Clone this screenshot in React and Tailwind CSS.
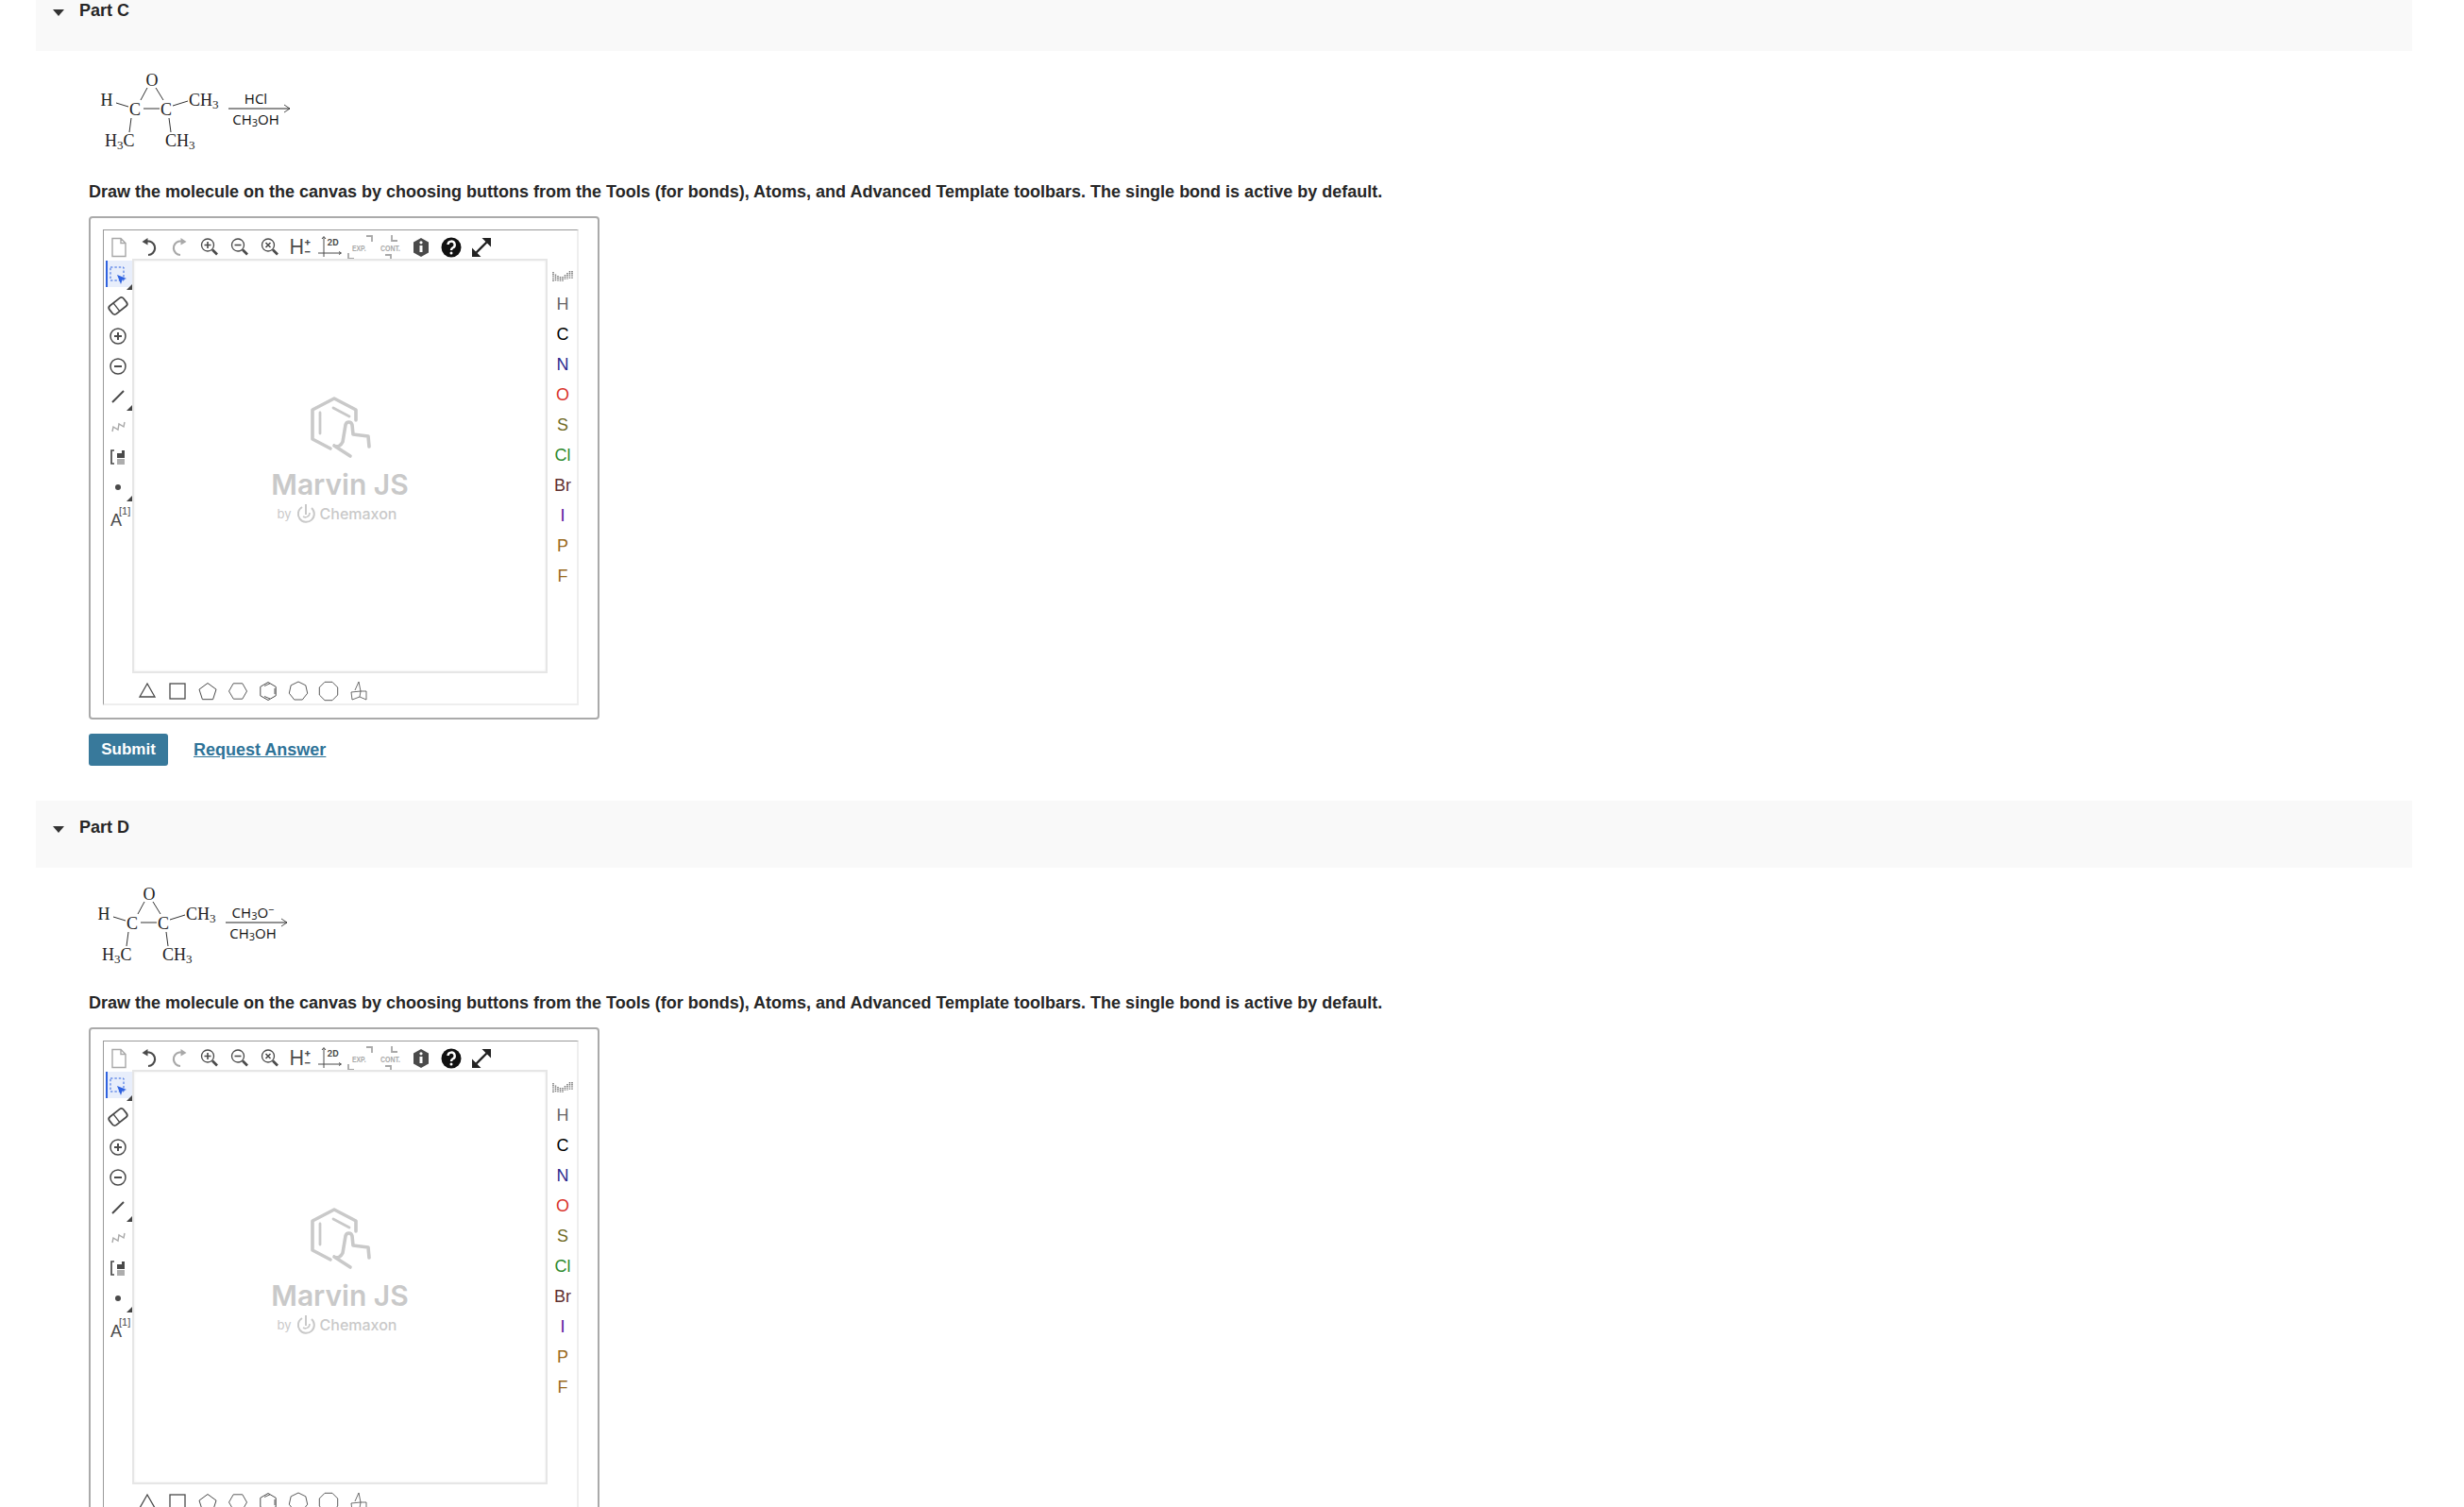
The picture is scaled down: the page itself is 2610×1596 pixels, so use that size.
const G = "#4a4a4a";
const L = "#a8a8a8";

function Bond({ d }) {
  return <line x1={d[0]} y1={d[1]} x2={d[2]} y2={d[3]} stroke="#333" strokeWidth="1" />;
}

function Molecule({ top, className }) {
  const serif = { fontFamily: '"Liberation Serif", serif', fontSize: 18, fill: "#222" };
  const sans = { fontFamily: '"Open Sans", "Noto Sans", sans-serif', fontSize: 15, fill: "#111", textAnchor: "middle" };
  const sub = { fontSize: 13, dy: 3 };
  const bonds = [
    [53, 20, 46, 33], [62, 20, 70, 33], [49, 42, 66, 42], [20, 36, 33, 40],
    [80, 39, 96, 34], [36, 52, 34, 67], [76, 52, 78, 67],
  ];
  return (
    <svg width="220" height="95" viewBox="0 0 220 95" className={className}>
      <text x="58" y="18" textAnchor="middle" {...serif}>O</text>
      <text x="10" y="39" textAnchor="middle" {...serif}>H</text>
      <text x="40" y="49" textAnchor="middle" {...serif}>C</text>
      <text x="73" y="49" textAnchor="middle" {...serif}>C</text>
      <text x="97" y="39" {...serif}>CH<tspan {...sub}>3</tspan></text>
      <text x="8" y="82" {...serif}>H<tspan {...sub}>3</tspan><tspan dy="-3">C</tspan></text>
      <text x="72" y="82" {...serif}>CH<tspan {...sub}>3</tspan></text>
      {bonds.map((d, i) => <Bond key={i} d={d} />)}
      <line x1="139" y1="42" x2="204" y2="42" stroke="#222" strokeWidth="1" />
      <path d="M198 38 L204 42 L198 46" fill="none" stroke="#222" strokeWidth="0.8" />
      <text x="168" y="37" {...sans}>{top}</text>
      <text x="168" y="59" {...sans}>CH<tspan fontSize="11" dy="2">3</tspan><tspan dy="-2">OH</tspan></text>
    </svg>
  );
}

function Ic({ children, size = 26 }) {
  return (
    <svg width={size} height={size} viewBox="0 0 26 26" fill="none" stroke={G} strokeWidth="1.6">
      {children}
    </svg>
  );
}

function Mag({ children }) {
  return (
    <Ic>
      <circle cx="11" cy="10.5" r="6.5" strokeWidth="1.3" />
      {children}
      <line x1="16" y1="15.5" x2="21" y2="20.5" strokeWidth="2.6" />
    </Ic>
  );
}

const topIcons = [
  <Ic><path d="M6 3.5 H15 L20 8.5 V22.5 H6 Z M15 3.5 V8.5 H20" stroke={L} strokeWidth="1.4" /></Ic>,
  <Ic><path d="M9 6.5 H13 A7.3 7.3 0 0 1 12 21" strokeWidth="2.2" /><path d="M5.5 7 L11.5 3 L11.5 10.5 Z" fill={G} stroke="none" /></Ic>,
  <Ic><path d="M17 6.5 H13 A7.3 7.3 0 0 0 14 21" stroke={L} strokeWidth="2.2" /><path d="M20.5 7 L14.5 3 L14.5 10.5 Z" fill={L} stroke="none" /></Ic>,
  <Mag><path d="M11 7 V14 M7.5 10.5 H14.5" strokeWidth="1.6" /></Mag>,
  <Mag><path d="M7.5 10.5 H14.5" strokeWidth="1.6" /></Mag>,
  <Mag><path d="M8.5 8 L13.5 13 M13.5 8 L8.5 13" strokeWidth="1.6" /></Mag>,
  <span className="font-['Inter',sans-serif] text-[21px] leading-none text-[#4a4a4a] flex items-start">H<span className="flex flex-col text-[11px] leading-[10px] font-bold"><span>+</span><span>−</span></span></span>,
  <svg width="28" height="26" viewBox="0 0 28 26" fill="none" stroke={G} strokeWidth="1"><path d="M7 2 V23 M1 19 H25 M5 4 L7 1.5 L9 4 M23 17.5 L25.5 19 L23 20.5" /><text x="10.5" y="11" fontSize="9" fontWeight="700" fill={G} stroke="none" fontFamily="Inter, sans-serif">2D</text></svg>,
  <svg width="28" height="26" viewBox="0 0 28 26" fill="none" stroke={L} strokeWidth="1.8"><path d="M20 1 H26 V7 M1 19 V25 H7" /><text transform="translate(5 17) scale(0.72 1)" fontSize="9.5" fontWeight="700" fill={L} stroke="none" fontFamily="Liberation Sans, sans-serif">EXP.</text></svg>,
  <svg width="28" height="26" viewBox="0 0 28 26" fill="none" stroke={L} strokeWidth="1.8"><path d="M15 0 V6 H21 M8 21 H14 V26" /><text transform="translate(3 17) scale(0.74 1)" fontSize="9.5" fontWeight="700" fill={L} stroke="none" fontFamily="Liberation Sans, sans-serif">CONT.</text></svg>,
  <Ic><path d="M13 3 L21 7.5 V18.5 L13 23 L5 18.5 V7.5 Z" fill={G} stroke="none" /><path d="M13 11 V18" stroke="#fff" strokeWidth="3" /><circle cx="13" cy="7.8" r="1.6" fill="#fff" stroke="none" /></Ic>,
  <Ic><circle cx="13" cy="13" r="10.5" fill="#111" stroke="none" /><path d="M9.5 10 A3.6 3.6 0 1 1 14.5 13.5 C13.3 14.2 13 15 13 16" stroke="#fff" strokeWidth="2.4" /><circle cx="13" cy="19" r="1.5" fill="#fff" stroke="none" /></Ic>,
  <Ic><path d="M7.5 18.5 L18.5 7.5" stroke="#222" strokeWidth="2.4" /><path d="M13.5 3 H23 V12.5 Z M3 13.5 V23 H12.5 Z" fill="#222" stroke="none" /></Ic>,
];

const leftIcons = [
  <svg width="26" height="26" viewBox="0 0 26 26" fill="none"><rect x="4" y="6" width="14" height="14" stroke="#2f62e0" strokeWidth="1" strokeDasharray="2.4 2" /><path d="M11 14 L21 18 L16.5 19.5 L15 24 Z" fill="#2f62e0" /></svg>,
  <Ic><g transform="rotate(-38 13 13)"><rect x="3.5" y="7.5" width="19" height="11" rx="3" strokeWidth="1.8" /><line x1="11" y1="7.5" x2="11" y2="18.5" strokeWidth="1.4" /></g></Ic>,
  <Ic><circle cx="13" cy="13" r="8" strokeWidth="1.5" /><path d="M13 9 V17 M9 13 H17" strokeWidth="2" /></Ic>,
  <Ic><circle cx="13" cy="13" r="8" strokeWidth="1.5" /><path d="M9 13 H17" strokeWidth="2" /></Ic>,
  <Ic><line x1="7" y1="19" x2="19" y2="7" strokeWidth="2" /></Ic>,
  <Ic><path d="M7 18 L8 13 L13 16 L14 10 L19 13 L20 8" stroke={L} strokeWidth="1.4" /></Ic>,
  <Ic><path d="M9 6 H6 V20 H9" strokeWidth="1.7" /><path d="M12 14 H20 V6 H17 V9 H12 Z" fill={G} stroke="none" /><path d="M12 16 H20 M12 18 H20 M12 20 H20" strokeWidth="0.9" /></Ic>,
  <Ic><circle cx="13" cy="13" r="3" fill={G} stroke="none" /></Ic>,
  <span className="relative block w-[26px] h-[26px] font-['Liberation_Sans',sans-serif] text-[#4a4a4a]"><span className="absolute left-[5px] top-[7px] text-[18px] leading-none">A</span><span className="absolute left-[14px] top-[1px] text-[11px] leading-none">[1]</span></span>,
];

const corner = new Set([0, 4, 7]);

const atoms = [
  ["H", "text-[#666666]"], ["C", "text-[#000000]"], ["N", "text-[#2b2b8f]"], ["O", "text-[#d9352b]"],
  ["S", "text-[#6f6a1f]"], ["Cl", "text-[#2f8a2f]"], ["Br", "text-[#5f3030]"], ["I", "text-[#5a0f9f]"],
  ["P", "text-[#9a6a20]"], ["F", "text-[#9a6a20]"],
];

function poly(n, r, cx = 13, cy = 13, rot = -90) {
  const pts = [];
  for (let i = 0; i < n; i++) {
    const a = ((rot + (360 / n) * i) * Math.PI) / 180;
    pts.push(`${(cx + r * Math.cos(a)).toFixed(1)},${(cy + r * Math.sin(a)).toFixed(1)}`);
  }
  return pts.join(" ");
}

const templates = [
  <Ic><polygon points="13,5 21,19 5,19" strokeWidth="1.3" /></Ic>,
  <Ic><rect x="5" y="5" width="16" height="16" strokeWidth="1.3" /></Ic>,
  <Ic><polygon points={poly(5, 9.5, 13, 14)} strokeWidth="1" /></Ic>,
  <Ic><polygon points={poly(6, 9.5, 13, 13, 0)} strokeWidth="0.9" /></Ic>,
  <Ic><polygon points={poly(6, 9.5)} strokeWidth="1" /><path d="M9 7.5 L15 4.8 M20 10 V16 M15 21 L9 18.5" strokeWidth="0.9" /></Ic>,
  <Ic><polygon points={poly(7, 10)} strokeWidth="0.9" /></Ic>,
  <Ic><polygon points={poly(8, 10.5, 13, 13, -67.5)} strokeWidth="0.9" /></Ic>,
  <Ic><path d="M13 3 L15 13 L5 14 L6 22 L14 19 L21 22 L21 13 L15 13 M13 3 L9 12 M14 19 L15 13" strokeWidth="0.8" /></Ic>,
];

function PeriodicIcon() {
  const bars = [[2, 12], [4.5, 12], [6, 12], [7, 12], [7, 12], [5, 10], [3, 10], [1, 9], [1, 9]];
  return (
    <svg width="22" height="13" viewBox="0 0 22 13">
      {bars.map((b, i) => (
        <line key={i} x1={1 + i * 2.5} x2={1 + i * 2.5} y1={b[0]} y2={b[1]} stroke="#777" strokeWidth="1.5" strokeDasharray="1.2 0.6" />
      ))}
    </svg>
  );
}

function Watermark() {
  return (
    <div className="flex flex-col items-center pt-[140px] w-full">
      <svg width="80" height="80" viewBox="58 16 80 80" fill="none" stroke="#c9c9c9" strokeWidth="3.6" strokeLinecap="round" strokeLinejoin="round">
        <path d="M115 45 V34 L92 22 L69 34 V65 L88 75" />
        <path d="M77 37 V59 M91 32 L108 41" strokeWidth="2.8" />
        <path d="M92 72 L109 83 M92 72 C96 74 99 72 101 68 L104 50 C105 46 110 46 111 50 L112 60 L128 62 L129 73" />
      </svg>
      <div className="font-['Inter',sans-serif] font-semibold text-[30px] leading-[36px] text-[#c9c9c9] mt-[-1px]">Marvin JS</div>
      <div className="flex items-center gap-[4px] mt-[1px] -ml-[6px] font-['Inter',sans-serif] text-[#c9c9c9] leading-[24px]">
        <span className="text-[13px]">by</span>
        <svg width="22" height="22" viewBox="0 0 22 22" fill="none" stroke="#c9c9c9" strokeWidth="2">
          <path d="M7 4 A8.5 8.5 0 1 0 17 5" />
          <path d="M11 1 V12" />
          <path d="M15 10 A4.5 4.5 0 0 1 8 14" strokeWidth="1.6" />
        </svg>
        <span className="text-[16px] font-medium">Chemaxon</span>
      </div>
    </div>
  );
}

function Editor() {
  return (
    <div className="mt-[14px] w-[541px] h-[533px] border-2 border-[#aaaaaa] rounded-[4px] pt-[12px] pl-[13px] bg-white shrink-0">
      <div className="w-[504px] h-[504px] border-t border-l border-t-[#999999] border-l-[#999999] border-r-2 border-b-2 border-r-[#eeeeee] border-b-[#eeeeee] flex flex-col">
        <div className="h-[30px] pt-[5px] flex items-center shrink-0">
          {topIcons.map((ic, i) => (
            <div key={i} className="w-[32px] h-[26px] flex items-center justify-center">{ic}</div>
          ))}
        </div>
        <div className="h-[439px] flex shrink-0">
          <div className="w-[30px] pt-[2px] shrink-0">
            {leftIcons.map((ic, i) => (
              <div key={i} className="relative w-[30px] h-[32px] flex items-center justify-center">
                {i === 0 && <div className="absolute left-[2px] top-0 w-[28px] h-[28px] bg-[#e8eefb] border-l-2 border-l-[#2f62e0]" />}
                <div className={i === 0 ? "relative -mt-[4px] ml-[2px]" : ""}>{ic}</div>
                {corner.has(i) && (
                  <div className="absolute right-0 bottom-[1px] w-0 h-0 border-l-[6px] border-l-transparent border-b-[6px] border-b-[#444444]" />
                )}
              </div>
            ))}
          </div>
          <div className="w-[440px] h-[439px] bg-white border-2 border-[#e6e6e6] shadow-[inset_0_0_3px_rgba(0,0,0,0.08)] shrink-0">
            <Watermark />
          </div>
          <div className="w-[32px] shrink-0 font-['Liberation_Sans',sans-serif] text-[18px]">
            <div className="h-[32px] pt-[4px] flex items-center justify-center"><PeriodicIcon /></div>
            {atoms.map(([a, c]) => (
              <div key={a} className={`h-[32px] flex items-center justify-center ${c}`}>{a}</div>
            ))}
          </div>
        </div>
        <div className="h-[32px] pl-[30px] pt-[5px] flex items-center shrink-0">
          {templates.map((ic, i) => (
            <div key={i} className="w-[32px] h-[26px] flex items-center justify-center">{ic}</div>
          ))}
        </div>
      </div>
    </div>
  );
}

function Header({ label }) {
  return (
    <div className="h-[71px] bg-[#f9f9f9] pl-[18px] pt-[16px] flex items-start shrink-0">
      <svg width="12" height="7" viewBox="0 0 12 7" className="mt-[11px]"><path d="M0 0 H12 L6 7 Z" fill="#333" /></svg>
      <span className="ml-[16px] text-[18px] leading-[24px] font-bold text-[#262626]">{label}</span>
    </div>
  );
}

function Instruction() {
  return (
    <p className="text-[18px] leading-[24px] font-bold text-[#262626]">
      Draw the molecule on the canvas by choosing buttons from the Tools (for bonds), Atoms, and Advanced Template toolbars. The single bond is active by default.
    </p>
  );
}

export default function App() {
  return (
    <div className="w-[2610px] h-[1596px] overflow-hidden bg-white font-['Liberation_Sans',Arial,sans-serif]">
      <div className="pl-[38px] pr-[55px] -mt-[17px] flex flex-col">
        <Header label="Part C" />
        <div className="pl-[56px]">
          <Molecule className="mt-[19px] ml-[9px] block" top={<tspan>HCl</tspan>} />
          <div className="mt-[23px]"><Instruction /></div>
          <Editor />
          <div className="mt-[15px] flex items-center gap-[27px]">
            <button className="w-[84px] h-[34px] bg-[#38799b] rounded-[3px] text-white text-[17px] font-bold">Submit</button>
            <a className="text-[18px] font-bold text-[#2e7398] underline">Request Answer</a>
          </div>
        </div>
        <div className="mt-[37px]"><Header label="Part D" /></div>
        <div className="pl-[56px]">
          <Molecule className="mt-[16px] ml-[6px] block" top={<>CH<tspan fontSize="11" dy="2">3</tspan><tspan dy="-2">O</tspan><tspan fontSize="11" dy="-5">−</tspan></>} />
          <div className="mt-[20px]"><Instruction /></div>
          <Editor />
        </div>
      </div>
    </div>
  );
}
